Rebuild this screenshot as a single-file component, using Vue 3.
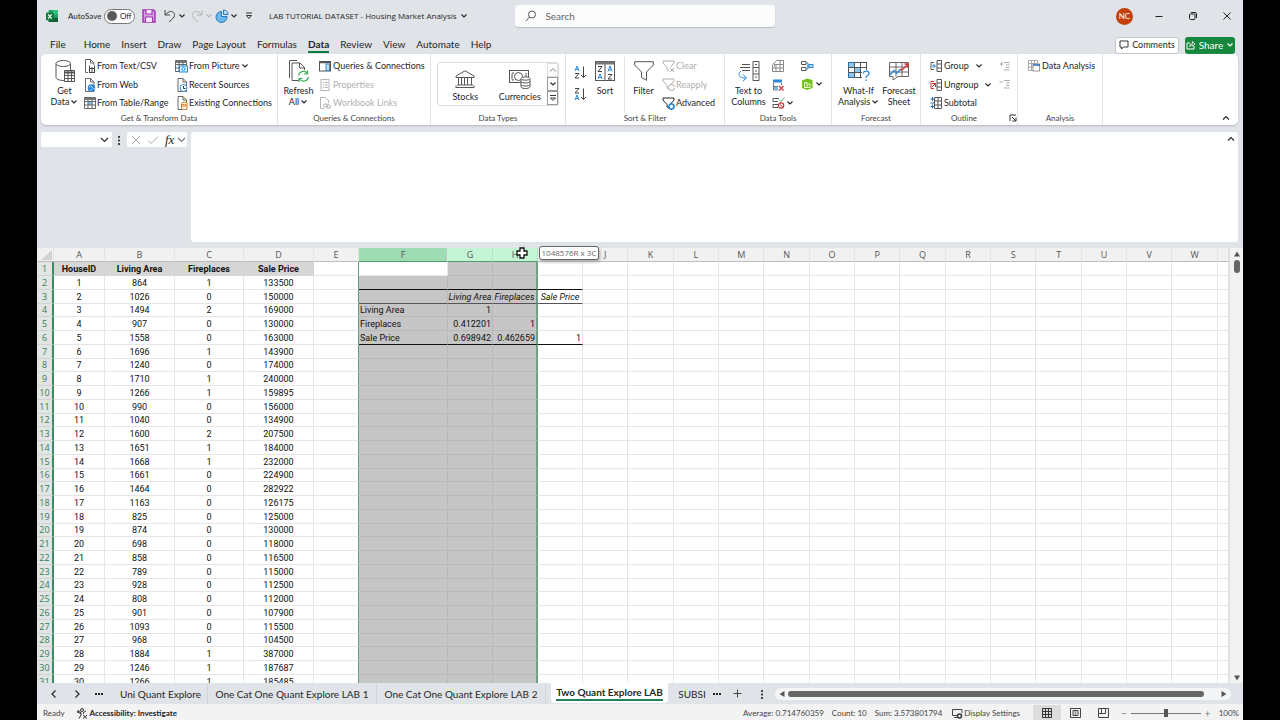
<script setup>
import { h } from 'vue'

const P = {
  sheet: '<path d="M3 .5H8L11.500 4V13.500H3Z" fill="#fff" stroke="#666"/><path d="M8 .5V4H11.500" fill="none" stroke="#666"/>',
  funnel: '<path d="M1 1H12V3L8 7.500V12L5 10V7.500L1 3Z" fill="#fff" stroke="currentColor"/>'
}

const shapes = {
  excel: [14, 14, '<rect x="3" width="11" height="14" rx="1" fill="#21a366"/><path d="M8 0H13Q14 0 14 1V5H8Z" fill="#33c481"/><path d="M3 9H14V13Q14 14 13 14H4Q3 14 3 13Z" fill="#185c37"/><rect y="3" width="9" height="9" rx="1" fill="#107c41"/><path d="M2.500 5L6.500 10M6.500 5L2.500 10" stroke="#fff" stroke-width="1.300"/>'],
  save: [14, 14, '<path d="M1 1H11.500L13 2.500V13H1Z" fill="#d9a0e4" stroke="#a334b5" stroke-width="1.500"/><path d="M4 1V5H10V1M3.500 13V8H10.500V13" fill="#f7e9f9" stroke="#a334b5" stroke-width="1.200"/>'],
  undo: [14, 14, '<path d="M2 1V6H7M2 6L5 3.500C8 1 12 3 11.500 6.500C11.300 8.500 9 10.500 6 13" fill="none" stroke="#444"/>'],
  redo: [14, 14, '<path d="M12 1V6H7M12 6L9 3.500C6 1 2 3 2.500 6.500C2.700 8.500 5 10.500 8 13" fill="none" stroke="currentColor"/>'],
  pie: [14, 14, '<path d="M6.500 2.500V7.500H12A5.500 5.500 0 1 1 6.500 2.500Z" fill="#6bb7ec" stroke="#2779b8"/><path d="M8.500 1V5.500H13A4.500 4.500 0 0 0 8.500 1Z" fill="#b9def8" stroke="#2779b8"/>'],
  custom: [8, 8, '<path d="M1 1H7" stroke="#333"/><path d="M1.500 3.500H6.500L4 6.500Z" fill="none" stroke="#333"/>'],
  chev: [8, 6, '<path d="M1.500 1.500L4 4L6.500 1.500" fill="none" stroke="currentColor" stroke-width="1.100"/>'],
  chevUp: [8, 6, '<path d="M1 4.500L4 1.500L7 4.500" fill="none" stroke="currentColor" stroke-width="1.100"/>'],
  chevWide: [9, 6, '<path d="M1 1L4.500 4.500L8 1" fill="none" stroke="currentColor" stroke-width="1.100"/>'],
  left: [8, 10, '<path d="M5.500 1.500L2 5L5.500 8.500" fill="none" stroke="currentColor" stroke-width="1.200"/>'],
  right: [8, 10, '<path d="M2.500 1.500L6 5L2.500 8.500" fill="none" stroke="currentColor" stroke-width="1.200"/>'],
  search: [12, 12, '<circle cx="7" cy="4.500" r="3.500" fill="none" stroke="#555"/><path d="M4.500 7L1 11" stroke="#555"/>'],
  min: [10, 10, '<path d="M1.500 5.500H8.500" stroke="#222"/>'],
  restore: [10, 10, '<rect x="1.500" y="3" width="5.500" height="5.500" rx="1" fill="none" stroke="#222"/><path d="M3 1.500H7Q8.500 1.500 8.500 3V7" fill="none" stroke="#222"/>'],
  close: [10, 10, '<path d="M1.500 1.500L8.500 8.500M8.500 1.500L1.500 8.500" stroke="#222"/>'],
  comment: [10, 10, '<path d="M1 1H9V7H4.500L2.500 9V7H1Z" fill="none" stroke="#333"/>'],
  share: [10, 10, '<path d="M4 3H1V9H8V6" fill="none" stroke="#fff"/><path d="M3.500 6.500Q4 3.500 6.500 3.500V1.500L9 4L6.500 6V5Q5 5 3.500 6.500Z" fill="none" stroke="#fff" stroke-width="0.800"/>'],
  getData: [20, 22, '<path d="M1 3.500V17.500C1 19 4 20.500 9 20.500M15.500 3.500V10" fill="none" stroke="#555"/><ellipse cx="8.250" cy="3.500" rx="7.250" ry="3" fill="#fff" stroke="#555"/><path d="M9.500 10.500H19.500V21.500H9.500Z" fill="#fff" stroke="#555"/><path d="M9.500 12.500H19.500" stroke="#555" stroke-width="2"/><path d="M9.500 15.500H19.500M9.500 18.500H19.500M13 11V21M16.500 11V21" stroke="#555"/>'],
  text: [12, 14, '<path d="M1.500 .5H6.500L10 4V13.500H1.500Z" fill="#fff" stroke="#666"/><path d="M6.500 .5V4H10" fill="none" stroke="#666"/><rect x="4" y="6" width="8" height="8" fill="#fff"/><path d="M5.500 6.500V13.500M8 8V13.500M10.500 6.500V13.500M5 13.500H11M5 9.500H11" fill="none" stroke="#444"/>'],
  web: [12, 14, '<path d="M1.500 .5H6.500L10 4V13.500H1.500Z" fill="#fff" stroke="#666"/><path d="M6.500 .5V4H10" fill="none" stroke="#666"/><circle cx="7.500" cy="10" r="3.800" fill="#2b88d8"/><path d="M5 9Q7 7 8 9T11 11M6 13L8 11" fill="none" stroke="#b5dcf7"/>'],
  table: [12, 14, '<path d="M.5 1.500H11.500V12.500H.5Z" fill="#fff" stroke="#666"/><path d="M.5 3H11.500" stroke="#777" stroke-width="2"/><path d="M4 5H8V9H4Z" fill="#7abcec"/><path d="M.5 5.500H11.500M.5 9H11.500M4 3V12.500M8 3V12.500" stroke="#666"/>'],
  picture: [13, 14, '<path d="M.5 1.500H11.500V12.500H.5Z" fill="#fff" stroke="#666"/><path d="M.5 3H11.500" stroke="#777" stroke-width="2"/><path d="M.5 5.500H11.500M.5 9H11.500M4 3V12.500M8 3V12.500" stroke="#666"/><rect x="4.500" y="7" width="8" height="6" fill="#dff0fc" stroke="#2b88d8"/><circle cx="8.500" cy="10" r="1.500" fill="#fff" stroke="#2b88d8"/>'],
  recent: [13, 14, P.sheet + '<circle cx="8.500" cy="10" r="3.500" fill="#fff" stroke="#2b88d8"/><path d="M8.500 8V10.500H10.500" fill="none" stroke="#333"/>'],
  existing: [13, 14, P.sheet + '<path d="M6.500 7.500V12.500C7 14 11.500 14 12 12.500V7.500" fill="#fff" stroke="#e07a1f"/><ellipse cx="9.250" cy="7.500" rx="2.750" ry="1.300" fill="#fff" stroke="#e07a1f"/><path d="M6.500 10H12" stroke="#e07a1f"/>'],
  refresh: [20, 22, '<path d="M.5 18V.5H8M3 20.500H10M3 20.500V3H11L15.500 7.500V10" fill="none" stroke="#555"/><path d="M10.500 3V8H15.500" fill="none" stroke="#555"/><path d="M9.500 15.500A5 5 0 0 1 18.500 13.500M18.500 10.500V14H15M19.500 17A5 5 0 0 1 10.500 19M10 22V18.500H13.500" fill="none" stroke="#3cae5c" stroke-width="1.200"/>'],
  queries: [12, 12, '<rect x=".5" y="1.500" width="11" height="9.500" fill="#fff" stroke="#555"/><path d="M.5 2.500H11.500" stroke="#555" stroke-width="1.500"/><rect x="7" y="4" width="3.500" height="6.500" fill="#bfe2fa" stroke="#2b88d8"/>'],
  props: [12, 12, '<rect x="2" y=".5" width="8" height="11" fill="none" stroke="#b5b5b5"/><path d="M4 3.500H5M6 3.500H8.500M4 6H5M6 6H8.500M4 8.500H5M6 8.500H8.500" stroke="#aaa"/>'],
  links: [12, 12, '<path d="M1.500 .5H6.500L9.500 3.500V6M5 11.500H1.500V.5" fill="none" stroke="#b5b5b5"/><rect x="4.500" y="7" width="4" height="3" rx="1.500" fill="none" stroke="#aaa"/><rect x="7.500" y="8" width="4" height="3" rx="1.500" fill="none" stroke="#aaa"/>'],
  bank: [20, 18, '<path d="M1 6L10 .8L19 6V7.500H1ZM2 15H18M.5 17.500H19.500M3.500 8V15M6.500 8V15M9.500 8V15M12.500 8V15M16.500 8V15M1 15.500V17M19 15.500V17" fill="none" stroke="#555"/>'],
  money: [22, 20, '<rect x=".5" y="1.500" width="19" height="12" fill="#fff" stroke="#555"/><path d="M3 4.500V10.500M17 4V8M3 4H5M3 11H5" stroke="#555"/><circle cx="9.500" cy="7.500" r="4" fill="none" stroke="#555"/><path d="M12 10V18C13 20 20 20 21 18V10" fill="#fff" stroke="#555"/><ellipse cx="16.500" cy="9.500" rx="4.500" ry="1.700" fill="#fff" stroke="#555"/><path d="M12 12.500C13 14.500 20 14.500 21 12.500M12 15.500C13 17.500 20 17.500 21 15.500" fill="none" stroke="#555"/>'],
  more: [8, 8, '<path d="M1 1.500H7" stroke="#333"/><path d="M1.500 4H6.500L4 6.500Z" fill="none" stroke="#333"/>'],
  az: [13, 14, '<path d="M1 6L3 1L5 6M1.500 4.500H4.500" fill="none" stroke="#2b88d8"/><path d="M1 8.500H5L1 13H5" fill="none" stroke="#444"/><path d="M9.500 1.500V12.500M7 10L9.500 12.500L12 10" fill="none" stroke="#444"/>'],
  za: [13, 14, '<path d="M1 13L3 8L5 13M1.500 11.500H4.500" fill="none" stroke="#2b88d8"/><path d="M1 1.500H5L1 6H5" fill="none" stroke="#444"/><path d="M9.500 1.500V12.500M7 10L9.500 12.500L12 10" fill="none" stroke="#444"/>'],
  sort: [20, 20, '<rect x=".5" y=".5" width="19" height="19" fill="#fff" stroke="#555"/><path d="M.5 2H19.500" stroke="#777" stroke-width="3"/><path d="M10 3V19.500" stroke="#555"/><path d="M3 5.500H7L3 10.500H7M13 13.500H17L13 18H17" fill="none" stroke="#444"/><path d="M3 18L5 13L7 18M3.500 16.500H6.500M13 10.500L15 5L17 10.500M13.500 9H16.500" fill="none" stroke="#2b88d8"/>'],
  filter: [20, 20, '<path d="M.7 .7H19.300V4L12.500 11V19.300L7.500 16.500V11L.7 4Z" fill="#fff" stroke="#555"/>'],
  clear: [13, 13, P.funnel + '<path d="M7 7H13V13H7Z" fill="#fff"/><path d="M8 8L12 12M12 8L8 12" stroke="#aaa"/>'],
  reapply: [13, 13, P.funnel + '<circle cx="9.500" cy="9.500" r="3" fill="#fff" stroke="#aaa"/><path d="M9.500 9.500H13" stroke="#fff"/>'],
  advanced: [13, 13, P.funnel + '<circle cx="9.500" cy="9.500" r="2.500" fill="#fff" stroke="#2b88d8" stroke-width="1.500"/><path d="M9.500 5.500V7M9.500 12V13.500M5.500 9.500H7M12 9.500H13.500" stroke="#2b88d8" stroke-width="1.500"/>'],
  columns: [22, 20, '<path d="M4 3.500H12M2 6.500H12M4 9.500H12" stroke="#555"/><path d="M3 10C-1 13 1 17.500 8 17M5 13.500L8.500 17L5 20" fill="none" stroke="#2b88d8"/><path d="M15 .5H21V19.500H15ZM15 6.500H21M15 13H21M17 3.500H19M17 10H19M17 16H19" fill="none" stroke="#555"/>'],
  flash: [12, 12, '<path d="M.5 4.500V11.500H11.500V.5H5M.5 8H11.500M4 4V11.500M8 .5V11.500M2 4.500H11.500" fill="none" stroke="#888"/><path d="M5 0L1 4H3.500L2 7" fill="none" stroke="#999"/>'],
  dupes: [12, 12, '<rect x="1" y=".5" width="9" height="3" fill="#2b88d8"/><path d="M1.500 4V11H6M1.500 7.500H6M9.500 4V6" fill="none" stroke="#777"/><rect x="2" y="8" width="4" height="3" fill="#7abcec"/><path d="M7 7L11.500 11.500M11.500 7L7 11.500" stroke="#d13438" stroke-width="1.200"/>'],
  validate: [13, 12, '<path d="M7 1.500H1V4.500H6M6 7.500H1V10.500H6" fill="none" stroke="#555"/><path d="M7 2.500L9 4.500L12.500 .5" fill="none" stroke="#3cae5c"/><circle cx="9" cy="8.500" r="2.700" fill="#fff" stroke="#d13438" stroke-width="1.200"/><path d="M7.300 7L10.700 10" stroke="#d13438"/>'],
  merge: [13, 12, '<path d="M.5 1.500H5V4.500H.5ZM.5 7.500H5V10.500H.5Z" fill="#fff" stroke="#555"/><path d="M5 3H7V9H5M6 6H8" fill="none" stroke="#2b88d8"/><rect x="8" y="4.500" width="4" height="3" fill="#bfe2fa" stroke="#2b88d8"/>'],
  model: [13, 12, '<path d="M1 2.500L6 .5L11.500 2V10L6 12L1 10Z" fill="#76c11c"/><path d="M3.500 4.500H6V9.500H3.500ZM6 6H9V9.500H6" fill="none" stroke="#e6f7cc"/>'],
  whatif: [22, 20, '<rect x=".5" y="1.500" width="18" height="15" fill="#fff" stroke="#555"/><path d="M.5 1.500H6.500V6.500H.5ZM.5 11.500H6.500V16.500H.5ZM6.500 6.500H12.500V11.500H6.500Z" fill="#8cc7f0" stroke="#2b6fa3"/><path d="M.5 6.500H18.500M.5 11.500H18.500M6.500 1.500V16.500M12.500 1.500V16.500" stroke="#555"/><path d="M14 9H22V20H14Z" fill="#fff"/><path d="M15.500 12.500C15.500 9 21 9.500 21 12.500C21 15 18 14 18 17M18 18.500V20" fill="none" stroke="#2b88d8" stroke-width="1.300"/>'],
  forecast: [20, 20, '<path d="M.5 1.500H19.500V15.500H9L4 19V15.500H.5ZM.5 6H19.500M.5 11H19.500M7 1.500V15.500M13 1.500V15.500" fill="#fff" stroke="#666"/><path d="M1 14L5 9.500L8 12L11 8.500" fill="none" stroke="#2b88d8" stroke-width="1.300"/><path d="M11 8.500L13 9L18.500 3.500M15.500 3H19V7" fill="none" stroke="#d13438" stroke-width="1.300"/>'],
  group: [12, 12, '<path d="M4 2.500H1V9.500H4" fill="none" stroke="#555"/><path d="M2 6H6M4 4V8" stroke="#2b88d8"/><path d="M7 .5H11.500V11.500H7ZM7 4H11.500M7 8H11.500" fill="#fff" stroke="#555"/>'],
  ungroup: [12, 12, '<path d="M4 2.500H1V9.500H4" fill="none" stroke="#d13438"/><path d="M2 8L6 4M2 4.500H5.500V8" fill="none" stroke="#d13438"/><path d="M7 .5H11.500V11.500H7ZM7 4H11.500M7 8H11.500" fill="#fff" stroke="#555"/>'],
  subtotal: [12, 12, '<path d="M4.500 .5H11.500V11.500H4.500ZM4.500 4H11.500M4.500 8H11.500M8 .5V11.500" fill="#fff" stroke="#555"/><path d="M.5 2H4M2.500 0V4M.5 6H4M.5 9.500H4M2.500 7.500V11.500" stroke="#2b6fa3"/>'],
  showDetail: [11, 10, '<path d="M.5 3H4.500M2.500 1V5M5 1.500H10.500M7 4H10.500M7 6.500H10.500M5 9H10.500" stroke="#aaa"/>'],
  hideDetail: [11, 10, '<path d="M.5 3H4M5 1.500H10.500M7 4H10.500M7 6.500H10.500M5 9H10.500" stroke="#aaa"/>'],
  analysis: [12, 12, '<path d="M.5 .5H9.500V10.500H.5ZM.5 3.500H9.500M.5 7H9.500M3.500 .5V10.500M6.500 .5V10.500" fill="#fff" stroke="#aaa"/><rect x="5" y="4" width="6.500" height="7" fill="#fff" stroke="#999"/><path d="M5 5H12" stroke="#2b6fb8" stroke-width="1.500"/>'],
  launch: [8, 8, '<path d="M1 7V1H7M3 3L7 7M7 3.500V7H3.500" fill="none" stroke="#333"/>'],
  x: [10, 10, '<path d="M1 1L9 9M9 1L1 9" stroke="#aaa"/>'],
  check: [12, 10, '<path d="M1 5.500L4 8.500L11 1.500" fill="none" stroke="#aaa"/>'],
  vdots: [4, 10, '<path d="M1 1H3V3H1ZM1 4.500H3V6.500H1ZM1 8H3V10H1Z" fill="#444"/>'],
  hdots: [10, 4, '<path d="M1 1H3V3H1ZM4 1H6V3H4ZM7 1H9V3H7Z" fill="#222"/>'],
  plus: [9, 9, '<path d="M4.500 .5V8.500M.5 4.500H8.500" stroke="#444"/>'],
  triL: [6, 8, '<path d="M5.500 1V7L.5 4Z" fill="#555"/>'],
  triR: [6, 8, '<path d="M.5 1V7L5.500 4Z" fill="#555"/>'],
  triU: [8, 6, '<path d="M1 5.500H7L4 .5Z" fill="#555"/>'],
  triD: [8, 6, '<path d="M1 .5H7L4 5.500Z" fill="#555"/>'],
  person: [11, 11, '<circle cx="5" cy="2" r="1.500" fill="none" stroke="#333"/><path d="M1 3L4 4.500V7L2 10.500M9 3L6.500 4.500V6" fill="none" stroke="#333"/><path d="M1.500 2L0 4L4 5.500" fill="none" stroke="#333"/><path d="M6 7L10 10.500M10 7L6 10.500" stroke="#333"/>'],
  display: [11, 11, '<path d="M5 7.500H.5V1.500H10V5M2 9.500H5" fill="none" stroke="#444"/><circle cx="7.500" cy="8" r="2" fill="none" stroke="#333" stroke-width="1.500"/>'],
  normal: [10, 10, '<path d="M.5 .5H9.500V9.500H.5ZM.5 3.500H9.500M.5 6.500H9.500M3.500 .5V9.500M6.500 .5V9.500" fill="none" stroke="#333"/>'],
  pageView: [11, 10, '<path d="M.5 .5H10.500V9.500H.5ZM3 2.500H8V7.500H3ZM4.500 4H6.500M4.500 6H6.500" fill="none" stroke="#444"/>'],
  breakView: [11, 10, '<path d="M.5 .5H10.500V9.500H.5ZM3.500 .5V5.500H7.500V.5M.5 5.500H3.500" fill="none" stroke="#444"/>'],
  corner: [11, 10, '<path d="M11 0V10H0Z" fill="#d2d2d2"/>'],
  cursor: [12, 12, '<path d="M4 1H8V4H11V8H8V11H4V8H1V4H4Z" fill="#fff" stroke="#111" stroke-width="1.300"/>']
}

const Ico = ({ n }) => {
  const [w, ht, body] = shapes[n]
  return h('svg', { width: w, height: ht, viewBox: `0 0 ${w} ${ht}`, innerHTML: body, 'aria-hidden': 'true' })
}
Ico.props = ['n']

const tabs = ['File', 'Home', 'Insert', 'Draw', 'Page Layout', 'Formulas', 'Data', 'Review', 'View', 'Automate', 'Help']
const letters = 'ABCDEFGHIJKLMNOPQRSTUVW'.split('')
const homes = [
  [864, 1, 133500], [1026, 0, 150000], [1494, 2, 169000], [907, 0, 130000], [1558, 0, 163000],
  [1696, 1, 143900], [1240, 0, 174000], [1710, 1, 240000], [1266, 1, 159895], [990, 0, 156000],
  [1040, 0, 134900], [1600, 2, 207500], [1651, 1, 184000], [1668, 1, 232000], [1661, 0, 224900],
  [1464, 0, 282922], [1163, 0, 126175], [825, 0, 125000], [874, 0, 130000], [698, 0, 118000],
  [858, 0, 116500], [789, 0, 115000], [928, 0, 112500], [808, 0, 112000], [901, 0, 107900],
  [1093, 0, 115500], [968, 0, 104500], [1884, 1, 387000], [1246, 1, 187687], [1266, 1, 185485]
]
const matrix = {
  3: { G: 'Living Area', H: 'Fireplaces', I: 'Sale Price' },
  4: { F: 'Living Area', G: '1' },
  5: { F: 'Fireplaces', G: '0.412201', H: '1' },
  6: { F: 'Sale Price', G: '0.698942', H: '0.462659', I: '1' }
}
const rows = Array.from({ length: 31 }, (_, i) => {
  const cells = i === 0
    ? { A: 'HouseID', B: 'Living Area', C: 'Fireplaces', D: 'Sale Price' }
    : { A: i, B: homes[i - 1][0], C: homes[i - 1][1], D: homes[i - 1][2] }
  return { n: i + 1, cells: { ...cells, ...(matrix[i + 1] || {}) } }
})
const cellClass = (r, c) => ({
  data: 'ABCD'.includes(c),
  title: r === 1 && 'ABCD'.includes(c),
  edge: c === 'E',
  sel: 'FGH'.includes(c) && !(r === 1 && c === 'F'),
  last: c === 'H',
  lab: c === 'F',
  num: 'GHI'.includes(c),
  head: r === 3 && 'GHI'.includes(c),
  thick: (r === 2 || r === 6) && 'FGHI'.includes(c),
  thin: r === 3 && 'FGHI'.includes(c)
})
</script>

<template>
  <div class="screen">
    <main class="app">
      <header class="titlebar">
        <Ico n="excel" class="logo" />
        <span class="autosave">AutoSave</span>
        <button class="toggle" role="switch" aria-checked="false"><i></i>Off</button>
        <button class="q save" aria-label="Save"><Ico n="save" /></button>
        <button class="q undo" aria-label="Undo"><Ico n="undo" /><Ico n="chev" /></button>
        <button class="q redo" aria-label="Redo"><Ico n="redo" /><Ico n="chev" /></button>
        <button class="q piebtn" aria-label="Chart"><Ico n="pie" /><Ico n="chev" /></button>
        <button class="q" aria-label="Customize toolbar"><Ico n="custom" /></button>
        <button class="filename">LAB TUTORIAL DATASET - Housing Market Analysis <Ico n="chev" /></button>
        <label class="search"><Ico n="search" /><input type="text" placeholder="Search" aria-label="Search" /></label>
        <div class="window">
          <button class="avatar">NC</button>
          <button class="q" aria-label="Minimize"><Ico n="min" /></button>
          <button class="q" aria-label="Restore"><Ico n="restore" /></button>
          <button class="q" aria-label="Close"><Ico n="close" /></button>
        </div>
      </header>

      <nav class="menubar">
        <button v-for="t in tabs" :key="t" class="menu" :class="{ active: t === 'Data' }">{{ t }}</button>
        <button class="comments"><Ico n="comment" />Comments</button>
        <button class="share"><Ico n="share" />Share<Ico n="chev" /></button>
      </nav>

      <section class="ribbon">
        <div class="group g1">
          <div class="body">
            <button class="big"><Ico n="getData" /><span>Get</span><span>Data <Ico n="chev" /></span></button>
            <div class="col c1">
              <button><Ico n="text" />From Text/CSV</button>
              <button><Ico n="web" />From Web</button>
              <button><Ico n="table" />From Table/Range</button>
            </div>
            <div class="col">
              <button><Ico n="picture" />From Picture<Ico n="chev" /></button>
              <button><Ico n="recent" />Recent Sources</button>
              <button><Ico n="existing" />Existing Connections</button>
            </div>
          </div>
          <div class="caption">Get &amp; Transform Data</div>
        </div>
        <div class="group g2">
          <div class="body">
            <button class="big"><Ico n="refresh" /><span>Refresh</span><span>All <Ico n="chev" /></span></button>
            <div class="col">
              <button><Ico n="queries" />Queries &amp; Connections</button>
              <button disabled><Ico n="props" />Properties</button>
              <button disabled><Ico n="links" />Workbook Links</button>
            </div>
          </div>
          <div class="caption">Queries &amp; Connections</div>
        </div>
        <div class="group g3">
          <div class="body">
            <div class="gallery">
              <button class="type"><Ico n="bank" />Stocks</button>
              <button class="type"><Ico n="money" />Currencies</button>
              <div class="arrows">
                <button disabled aria-label="Up"><Ico n="chevUp" /></button>
                <button aria-label="Down"><Ico n="chev" /></button>
                <button aria-label="More"><Ico n="more" /></button>
              </div>
            </div>
          </div>
          <div class="caption">Data Types</div>
        </div>
        <div class="group g4">
          <div class="body">
            <div class="col pair">
              <button aria-label="Sort A to Z"><Ico n="az" /></button>
              <button aria-label="Sort Z to A"><Ico n="za" /></button>
            </div>
            <button class="big sortbtn"><Ico n="sort" /><span>Sort</span></button>
            <button class="big filterbtn"><Ico n="filter" /><span>Filter</span></button>
            <div class="col">
              <button disabled><Ico n="clear" />Clear</button>
              <button disabled><Ico n="reapply" />Reapply</button>
              <button><Ico n="advanced" />Advanced</button>
            </div>
          </div>
          <div class="caption">Sort &amp; Filter</div>
        </div>
        <div class="group g5">
          <div class="body">
            <button class="big"><Ico n="columns" /><span>Text to</span><span>Columns</span></button>
            <div class="col tools">
              <button aria-label="Flash Fill"><Ico n="flash" /></button>
              <button aria-label="Remove Duplicates"><Ico n="dupes" /></button>
              <button aria-label="Data Validation"><Ico n="validate" /><Ico n="chev" /></button>
            </div>
            <div class="col top">
              <button aria-label="Consolidate"><Ico n="merge" /></button>
              <button aria-label="Data Model"><Ico n="model" /><Ico n="chev" /></button>
            </div>
          </div>
          <div class="caption">Data Tools</div>
        </div>
        <div class="group g6">
          <div class="body">
            <button class="big"><Ico n="whatif" /><span>What-If</span><span>Analysis <Ico n="chev" /></span></button>
            <button class="big"><Ico n="forecast" /><span>Forecast</span><span>Sheet</span></button>
          </div>
          <div class="caption">Forecast</div>
        </div>
        <div class="group g7">
          <div class="body">
            <div class="col">
              <button><Ico n="group" />Group<Ico n="chev" class="far" /></button>
              <button><Ico n="ungroup" />Ungroup<Ico n="chev" class="far" /></button>
              <button><Ico n="subtotal" />Subtotal</button>
            </div>
            <div class="col top detail">
              <button aria-label="Show Detail"><Ico n="showDetail" /></button>
              <button aria-label="Hide Detail"><Ico n="hideDetail" /></button>
            </div>
          </div>
          <div class="caption outline">Outline<button class="launcher" aria-label="Outline settings"><Ico n="launch" /></button></div>
        </div>
        <div class="group g8">
          <div class="body">
            <div class="col"><button><Ico n="analysis" />Data Analysis</button></div>
          </div>
          <div class="caption">Analysis</div>
        </div>
        <button class="collapse" aria-label="Collapse ribbon"><Ico n="chevUp" /></button>
      </section>

      <section class="formula">
        <div class="namebox"><input type="text" aria-label="Name box" /><Ico n="chevWide" /></div>
        <Ico n="vdots" class="grip" />
        <div class="fxbox">
          <button aria-label="Cancel"><Ico n="x" /></button>
          <button aria-label="Enter"><Ico n="check" /></button>
          <button class="fx">fx</button>
          <Ico n="chevWide" />
        </div>
        <div class="inputwrap">
          <textarea aria-label="Formula"></textarea>
          <button aria-label="Collapse formula bar"><Ico n="chevUp" /></button>
        </div>
      </section>

      <section class="sheet">
        <div class="cells">
          <table>
            <colgroup>
              <col class="w17" /><col class="w51" /><col class="w70" /><col class="w69" /><col class="w70" />
              <col class="w45" /><col class="w89" /><col class="w45" /><col class="w45" /><col class="w45" />
              <col v-for="n in 14" :key="n" /><col class="w11" />
            </colgroup>
            <thead>
              <tr>
                <th class="corner"><Ico n="corner" /></th>
                <th v-for="l in letters" :key="l" :class="{ first: l === 'F', picked: 'GH'.includes(l) }">{{ l === 'I' ? '' : l }}</th>
                <th></th>
              </tr>
            </thead>
            <tbody>
              <tr v-for="r in rows" :key="r.n">
                <th>{{ r.n }}</th>
                <td v-for="l in letters" :key="l" :class="cellClass(r.n, l)">{{ r.cells[l] }}</td>
                <td></td>
              </tr>
            </tbody>
          </table>
          <Ico n="cursor" class="cursor" />
          <div class="tip">1048576R x 3C</div>
        </div>
        <div class="vscroll"><Ico n="triU" /><i></i><Ico n="triD" class="end" /></div>
      </section>

      <nav class="sheets">
        <button class="nav" aria-label="Previous sheet"><Ico n="left" /></button>
        <button class="nav" aria-label="Next sheet"><Ico n="right" /></button>
        <button class="nav" aria-label="More sheets"><Ico n="hdots" /></button>
        <button class="tab t1">Uni Quant Explore</button>
        <button class="tab t2">One Cat One Quant Explore LAB 1</button>
        <button class="tab t2">One Cat One Quant Explore LAB 2</button>
        <button class="tab current"><span>Two Quant Explore LAB</span></button>
        <button class="tab cut">SUBSI</button>
        <button class="nav small" aria-label="Hidden sheets"><Ico n="hdots" /></button>
        <button class="nav" aria-label="New sheet"><Ico n="plus" /></button>
        <Ico n="vdots" class="grip2" />
        <div class="hscroll"><Ico n="triL" /><i></i><Ico n="triR" /></div>
      </nav>

      <footer class="status">
        <span>Ready</span>
        <button class="access"><Ico n="person" />Accessibility: Investigate</button>
        <span class="avg">Average: 0.714760359</span>
        <span>Count: 10</span>
        <span class="sum">Sum: 3.573801794</span>
        <button class="disp"><Ico n="display" />Display Settings</button>
        <button class="view on" aria-label="Normal view"><Ico n="normal" /></button>
        <button class="view" aria-label="Page layout view"><Ico n="pageView" /></button>
        <button class="view" aria-label="Page break view"><Ico n="breakView" /></button>
        <div class="zoom"><span>−</span><input type="range" min="0" max="100" value="50" aria-label="Zoom" /><span>+</span></div>
        <span class="pct">100%</span>
      </footer>
    </main>
  </div>
</template>

<style>
body { background: #000; }
</style>

<style scoped>
.screen { height: 100vh; padding: 0 37px; background: #000; box-sizing: border-box; }
.app { height: 100%; display: flex; flex-direction: column; background: #e0e3e7; color: #262626; font-family: Lato, "Open Sans", sans-serif; font-size: 9px; line-height: 12px; overflow: hidden; }
.app * { box-sizing: border-box; }
button, input, textarea { font: inherit; color: inherit; background: none; border: 0; padding: 0; margin: 0; outline: 0; }
button { display: flex; align-items: center; white-space: nowrap; }
svg { flex: none; display: block; }

.titlebar { height: 32px; flex: none; display: flex; align-items: center; padding-left: 9px; position: relative; }
.logo { width: 12px; height: 12px; }
.autosave { margin-left: 10px; width: 32px; font-size: 8px; white-space: nowrap; }
.toggle { margin-left: 4px; width: 31px; height: 15px; border: 1px solid #777; border-radius: 8px; background: #fff; font-size: 8px; gap: 3px; padding-left: 2px; }
.toggle i { width: 10px; height: 10px; border-radius: 5px; background: #5a5a5a; }
.save { margin-left: 7px; }
.undo { margin-left: 7px; gap: 1px; }
.redo { margin-left: 4px; gap: 1px; color: #b0b3b6; }
.piebtn { margin-left: 2px; gap: 1px; margin-right: 7px; }
.filename { margin-left: 16px; gap: 3px; font-family: "Open Sans", sans-serif; font-size: 8px; }
.search { position: absolute; left: 40%; top: 5px; height: 22px; width: 260px; margin-left: -4px; background: #fbfbfc; border-radius: 3px; box-shadow: 0 1px 1px #b9bcc0; display: flex; align-items: center; padding-left: 10px; gap: 8px; font-size: 10px; }
.search input { width: 200px; }
.search input::placeholder { color: #666; opacity: 1; }
.window { margin-left: auto; display: flex; align-items: center; gap: 24px; padding-right: 11px; }
.avatar { width: 17px; height: 17px; border-radius: 9px; background: #c4410c; color: #fff; font-size: 8px; justify-content: center; margin-right: -3px; }

.menubar { height: 22px; flex: none; display: flex; align-items: center; padding: 4px 8px 0 13px; gap: 11px; font-size: 10px; }
.menu { height: 16px; border-bottom: 2px solid transparent; }
.menu:first-child { margin-right: 7px; }
.active { font-weight: 700; border-color: #107c41; }
.comments { margin-left: auto; margin-right: -5px; height: 17px; width: 64px; justify-content: center; gap: 3px; background: #fff; border: 1px solid #c4c6c9; border-radius: 3px; font-size: 9px; }
.share { height: 17px; width: 50px; justify-content: center; gap: 3px; background: #16883e; color: #fff; border-radius: 3px; }

.ribbon { height: 71px; flex: none; margin: 0 5px 0 4px; background: #fff; border-radius: 5px; box-shadow: 0 1px 2px #b5b8bc; display: flex; position: relative; }
.group { display: flex; flex-direction: column; padding-top: 3px; position: relative; border-right: 1px solid #e3e3e3; }
.body { height: 55px; display: flex; }
.caption { text-align: center; font-size: 8px; line-height: 13px; position: relative; color: #444; }
.big { flex-direction: column; line-height: 11px; padding-top: 3px; }
.big > svg { height: 22px; margin-bottom: 3px; }
.big span { display: flex; align-items: center; gap: 1px; }
.col { display: flex; flex-direction: column; justify-content: space-between; }
.col button { height: 18px; gap: 1px; }
.col.top { justify-content: flex-start; }
.far { margin-left: 4px; }
button:disabled { color: #b0b0b0; }
.g1 { width: 237px; }
.g1 .big { width: 43px; padding-left: 4px; }
.c1 { width: 91px; }
.g2 { width: 153px; }
.g2 .big { width: 41px; }
.g2 .col button { gap: 2px; }
.g3 { width: 135px; }
.gallery { margin: 5px 0 0 6px; width: 122px; height: 44px; border: 1px solid #dcdcdc; border-radius: 3px; display: flex; }
.type { width: 55px; flex-direction: column; padding-top: 6px; gap: 2px; line-height: 11px; }
.type svg { height: 20px; }
.arrows { margin-left: auto; width: 11px; display: flex; flex-direction: column; }
.arrows button { flex: 1; justify-content: center; border: 1px solid #999; }
.arrows button:disabled { border-color: #ddd; }
.g4 { width: 159px; }
.pair { width: 29px; padding: 6px 0 9px 8px; }
.sortbtn { width: 20px; }
.filterbtn { margin-left: 9px; width: 38px; border-left: 1px solid #e3e3e3; }
.g5 { width: 107px; }
.g5 .big { width: 47px; }
.tools { width: 29px; }
.g6 { width: 89px; }
.g6 .big { width: 40px; }
.g6 .big:first-child { width: 47px; padding-left: 6px; }
.g7 { width: 97px; }
.g7 .body { padding-left: 9px; }
.g7 .col button { gap: 2px; }
.outline { padding-right: 10px; }
.detail { margin-left: auto; padding-right: 7px; }
.launcher { position: absolute; right: 0; top: 2px; }
.g8 { width: 85px; }
.g8 .body { padding-left: 10px; }
.g8 .col button { gap: 2px; }
.collapse { position: absolute; right: 8px; bottom: 4px; }

.formula { height: 123px; flex: none; display: flex; align-items: flex-start; padding: 7px 5px 6px 4px; }
.namebox { width: 71px; height: 15px; background: #fff; border-radius: 2px; display: flex; align-items: center; padding-right: 3px; }
.namebox input { flex: 1; min-width: 0; }
.grip { margin: 3px 6px 0 5px; }
.fxbox { width: 60px; height: 15px; background: #fff; border-radius: 2px; display: flex; align-items: center; padding-left: 4px; gap: 6px; }
.fx { font-family: "Liberation Serif", serif; font-style: italic; font-size: 13px; }
.fxbox > svg { margin-left: -3px; color: #777; }
.inputwrap { flex: 1; align-self: stretch; margin-left: 4px; background: #fff; border-radius: 3px; display: flex; align-items: flex-start; }
.inputwrap textarea { flex: 1; align-self: stretch; resize: none; }
.inputwrap button { padding: 4px 3px 0 0; }

.sheet { flex: 1; min-height: 0; display: flex; }
.cells { flex: 1; min-width: 0; overflow: clip; overflow-clip-margin: 2px; position: relative; background: #fff; }
table { width: 100%; table-layout: fixed; border-collapse: separate; border-spacing: 0; }
.w17 { width: 17px; } .w51 { width: 51px; } .w69 { width: 69px; } .w70 { width: 70px; } .w45 { width: 45px; }
.w89 { width: 89px; } .w11 { width: 11px; }
th { padding: 0; font-family: "Open Sans", sans-serif; font-weight: 400; height: 14px; line-height: 12px; }
thead th { padding: 1px 0 0; background: #f1f1f1; border-bottom: 1px solid #bdbdbd; border-right: 1px solid #e4e4e4; color: #555; }
.corner svg { margin-left: 4px; }
.first { background: #9fdbb3; border-bottom-color: #4f9a70; }
.picked { background: #c6f5d6; border-color: #b4e4c5; border-bottom-color: #4f9a70; }
tbody th { background: #e1e5e3; color: #357f58; border-right: 2px solid #3f8a62; border-bottom: 1px solid #cfd3d1; }
td { height: 14px; padding: 0; line-height: 12px; border-right: 1px solid #e6e6e6; border-bottom: 1px solid #e6e6e6; font-family: Roboto, "Liberation Sans", sans-serif; color: #111; white-space: nowrap; }
tbody tr:nth-child(4n) > * { height: 13px; }
.data { text-align: center; }
.title { background: #d6d6d6; border-color: #d6d6d6; font-weight: 700; }
.edge { border-right-color: #5f9a7a; }
.sel { background: #c6c6c6; border-color: #b9b9b9; }
.last { border-right: 2px solid #6f9f85; }
.lab { padding-left: 1px; }
.num { text-align: right; padding-right: 1px; }
.head { font-style: italic; text-align: center; padding: 0; }
.thick, .thin { border-bottom-color: #111; }
.thin { border-bottom-color: #555; }
.cursor { position: absolute; left: 479px; top: -1px; }
.tip { position: absolute; left: 502px; top: -2px; width: 60px; height: 14px; line-height: 12px; border: 1px solid #666; border-radius: 3px; background: #fff; color: #666; text-align: center; font-family: "Open Sans", sans-serif; font-size: 8px; box-shadow: 1px 2px 3px #aaa; white-space: nowrap; }
.vscroll { width: 14px; background: #f3f3f3; border-left: 1px solid #ddd; display: flex; flex-direction: column; align-items: center; padding: 3px 0 2px; gap: 3px; }
.vscroll i { width: 6px; height: 13px; border-radius: 3px; background: #666; }
.end { margin-top: auto; }

.sheets { height: 21px; flex: none; display: flex; align-items: center; font-size: 10px; position: relative; background: #e0e4e8; padding-left: 5px; }
.nav { width: 23px; justify-content: center; height: 20px; }
.nav:nth-child(3) { width: 22px; }
.tab { height: 20px; justify-content: center; border-right: 1px solid #d2d5d9; }
.t1 { width: 98px; padding-left: 4px; }
.t2 { width: 169px; }
.current { width: 117px; margin-left: 5px; background: #fff; border: 0; border-radius: 0 0 4px 4px; align-self: flex-start; font-weight: 700; }
.current span { border-bottom: 2px solid #21825a; line-height: 14px; }
.cut { border: 0; width: 40px; padding-left: 8px; }
.small { width: 18px; }
.grip2 { margin: 0 11px 0 11px; }
.hscroll { flex: 1; height: 12px; border-radius: 6px; margin-right: 12px; padding: 0 4px; display: flex; align-items: center; background: #f3f4f6; gap: 3px; }
.hscroll i { flex: 1; margin-right: 14px; height: 6px; border-radius: 3px; background: #666; }

.status { height: 16px; flex: none; background: #f3f3f3; display: flex; align-items: center; padding: 2px 4px 0 6px; font-size: 8px; color: #444; white-space: nowrap; }
.access { margin-left: 12px; gap: 2px; font-weight: 700; color: #222; }
.avg { margin-left: auto; margin-right: 8px; }
.sum { margin: 0 10px 0 8px; }
.disp { gap: 1px; margin-right: 13px; }
.view { width: 28px; height: 16px; justify-content: center; }
.on { background: #dcdcdc; }
.zoom { display: flex; align-items: center; gap: 4px; margin: 0 8px 0 4px; font-size: 10px; color: #777; }
.zoom input { width: 70px; height: 12px; appearance: none; background: linear-gradient(#777, #777) center / 100% 1px no-repeat; }
.zoom input::-webkit-slider-thumb { appearance: none; width: 4px; height: 8px; background: #555; }
</style>
